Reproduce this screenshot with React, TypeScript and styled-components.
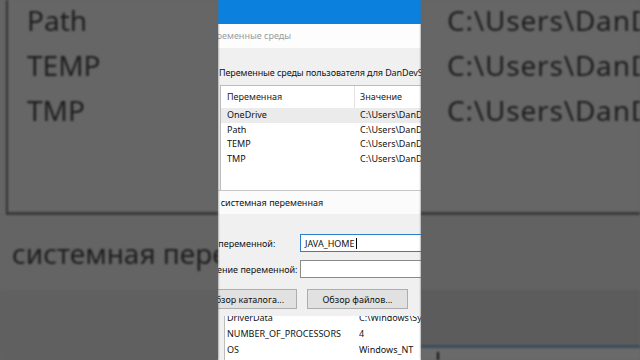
import React from "react";
import styled, { createGlobalStyle } from "styled-components";

const GlobalStyle = createGlobalStyle`
  html, body {
    margin: 0;
    padding: 0;
    background: #646464;
  }
  body {
    font-family: "Noto Sans", "Liberation Sans", sans-serif;
  }
`;

const Frame = styled.div`
  width: 640px;
  height: 360px;
  display: flex;
  overflow: hidden;
  background: #646464;
`;

/* blurred, zoomed copy of the dialog on both sides of the video */
const Backdrop = styled.div<{ $width: number; $spacing?: number }>`
  width: ${(p) => p.$width}px;
  flex: none;
  display: flex;
  flex-direction: column;
  overflow: hidden;
  color: #1d1d1d;
  font-size: 28px;
  letter-spacing: ${(p) => p.$spacing ?? 0}px;
  filter: blur(1px);
`;

const ZoomList = styled.div<{ $edge?: boolean; $pad: number }>`
  height: 212px;
  flex: none;
  margin-left: ${(p) => (p.$edge ? 6 : 0)}px;
  padding-left: ${(p) => p.$pad}px;
  border-left: ${(p) => (p.$edge ? "2px solid #333" : "none")};
  border-bottom: 3px solid #3a3a3a;
  background: #666;
`;

const ZoomRows = styled.div`
  margin-top: -2px;
`;

const ZoomRow = styled.div`
  height: 45px;
  line-height: 45px;
  white-space: nowrap;
`;

const ZoomBand = styled.div<{ $tone: string; $h?: number }>`
  height: ${(p) => (p.$h ? `${p.$h}px` : "auto")};
  flex: ${(p) => (p.$h ? "none" : 1)};
  background: ${(p) => p.$tone};
  padding-left: 12px;
  padding-top: 18px;
  line-height: 40px;
  white-space: nowrap;
  box-sizing: border-box;
`;

const ZoomInputEdge = styled.div`
  flex: 1;
  background: #6a6a6a;
  border-top: 3px solid #3b4c5a;
  padding-left: 16px;
  padding-top: 4px;
`;

const ZoomCaret = styled.div`
  width: 2px;
  height: 12px;
  background: #111;
`;

/* the actual video strip */
const Strip = styled.div`
  width: 203px;
  flex: none;
  display: flex;
  flex-direction: column;
  overflow: hidden;
  background: #f0f0f0;
  font-size: 9px;
  color: #111;
`;

const TitleBar = styled.div`
  height: 24px;
  flex: none;
  background: #0c80dd;
`;

const InactiveTitle = styled.div`
  height: 24px;
  flex: none;
  background: #fdfdfd;
  color: #9b9b9b;
  line-height: 24px;
  white-space: nowrap;
  overflow: hidden;
`;

const Clipped = styled.span<{ $shift: number }>`
  display: inline-block;
  margin-left: ${(p) => -p.$shift}px;
  white-space: nowrap;
`;

const UserPanel = styled.div`
  flex: none;
  padding-top: 19px;
  display: flex;
  flex-direction: column;
`;

const SectionLabel = styled.div`
  height: 12px;
  line-height: 12px;
  padding-left: 1px;
  white-space: nowrap;
  letter-spacing: -0.1px;
`;

const ListBox = styled.div`
  margin-top: 6px;
  margin-left: 2px;
  height: 105px;
  box-sizing: border-box;
  background: #fff;
  border: 1px solid #bcbcbc;
  border-right: none;
  border-bottom: none;
`;

const ListHeader = styled.div`
  display: grid;
  grid-template-columns: 133px 1fr;
  height: 22px;
  align-items: center;
  color: #222;
`;

const HeaderCell = styled.div<{ $divider?: boolean }>`
  padding-left: ${(p) => (p.$divider ? 5 : 6)}px;
  border-left: ${(p) => (p.$divider ? "1px solid #e3e3e3" : "none")};
  line-height: 22px;
  white-space: nowrap;
`;

const ListRow = styled.div<{ $selected?: boolean; $cols: number; $h: number }>`
  display: grid;
  grid-template-columns: ${(p) => p.$cols}px 1fr;
  height: ${(p) => p.$h}px;
  line-height: ${(p) => p.$h}px;
  background: ${(p) => (p.$selected ? "#ebebeb" : "transparent")};
  white-space: nowrap;
`;

const Cell = styled.div<{ $pad: number }>`
  padding-left: ${(p) => p.$pad}px;
  overflow: hidden;
`;

const DialogTitle = styled.div`
  height: 23px;
  flex: none;
  line-height: 23px;
  background: #fbfbfb;
  border-top: 1px solid #c6c6c6;
  padding-left: 4px;
  white-space: nowrap;
  overflow: hidden;
`;

const DialogBody = styled.div`
  flex: none;
  padding: 20px 0 7px;
  display: flex;
  flex-direction: column;
  gap: 8px;
`;

const Field = styled.div`
  display: grid;
  grid-template-columns: 82px 140px;
  height: 18px;
  align-items: center;
`;

const FieldLabel = styled.div`
  overflow: hidden;
  white-space: nowrap;
`;

const TextInput = styled.div<{ $focused?: boolean }>`
  height: 18px;
  box-sizing: border-box;
  background: #fff;
  border: 1px solid ${(p) => (p.$focused ? "#2b7fd0" : "#8a8a8a")};
  padding-left: 4px;
  display: flex;
  align-items: center;
  white-space: nowrap;
`;

const Caret = styled.span`
  width: 1px;
  height: 11px;
  background: #000;
  margin-left: 1px;
`;

const ButtonRow = styled.div`
  margin-top: 3px;
  margin-left: -22px;
  display: flex;
  gap: 10px;
`;

const DialogButton = styled.div`
  width: 101px;
  height: 20px;
  flex: none;
  box-sizing: border-box;
  background: #e1e1e1;
  border: 1px solid #adadad;
  display: flex;
  align-items: center;
  justify-content: center;
  white-space: nowrap;
`;

const SysList = styled.div`
  flex: 1;
  margin-left: 6px;
  background: #fff;
  border-left: 1px solid #bcbcbc;
  overflow: hidden;
`;

const SysRows = styled.div`
  margin-top: -6px;
`;

const userVars = [
  { name: "OneDrive", value: "C:\\Users\\DanDevSoft\\OneDrive" },
  { name: "Path", value: "C:\\Users\\DanDevSoft\\AppData" },
  { name: "TEMP", value: "C:\\Users\\DanDevSoft\\AppData" },
  { name: "TMP", value: "C:\\Users\\DanDevSoft\\AppData" },
];

const sysVars = [
  { name: "DriverData", value: "C:\\Windows\\System32\\Drivers" },
  { name: "NUMBER_OF_PROCESSORS", value: "4" },
  { name: "OS", value: "Windows_NT" },
];

const zoomValues = ["C:\\Users\\DanDevSoft", "C:\\Users\\DanDevSoft", "C:\\Users\\DanDevSoft"];

export default function App() {
  return (
    <>
      <GlobalStyle />
      <Frame>
        <Backdrop $width={218}>
          <ZoomList $edge $pad={19}>
            <ZoomRows>
              <ZoomRow>Path</ZoomRow>
              <ZoomRow>TEMP</ZoomRow>
              <ZoomRow>TMP</ZoomRow>
            </ZoomRows>
          </ZoomList>
          <ZoomBand $tone="#646464" $h={75}>системная переменная</ZoomBand>
          <ZoomBand $tone="#606060" />
        </Backdrop>

        <Strip>
          <TitleBar />
          <InactiveTitle>
            <Clipped $shift={13}>Переменные среды</Clipped>
          </InactiveTitle>
          <UserPanel>
            <SectionLabel>Переменные среды пользователя для DanDevSoft</SectionLabel>
            <ListBox>
              <ListHeader>
                <HeaderCell>Переменная</HeaderCell>
                <HeaderCell $divider>Значение</HeaderCell>
              </ListHeader>
              {userVars.map((v) => (
                <ListRow key={v.name} $selected={v.name === "OneDrive"} $cols={133} $h={14.6}>
                  <Cell $pad={6}>{v.name}</Cell>
                  <Cell $pad={6}>{v.value}</Cell>
                </ListRow>
              ))}
            </ListBox>
          </UserPanel>
          <DialogTitle>
            <Clipped $shift={31}>Новая системная переменная</Clipped>
          </DialogTitle>
          <DialogBody>
            <Field>
              <FieldLabel>
                <Clipped $shift={21}>Имя переменной:</Clipped>
              </FieldLabel>
              <TextInput $focused>
                JAVA_HOME
                <Caret />
              </TextInput>
            </Field>
            <Field>
              <FieldLabel>
                <Clipped $shift={22}>Значение переменной:</Clipped>
              </FieldLabel>
              <TextInput />
            </Field>
            <ButtonRow>
              <DialogButton>Обзор каталога...</DialogButton>
              <DialogButton>Обзор файлов...</DialogButton>
            </ButtonRow>
          </DialogBody>
          <SysList>
            <SysRows>
              {sysVars.map((v) => (
                <ListRow key={v.name} $cols={134} $h={16}>
                  <Cell $pad={2}>{v.name}</Cell>
                  <Cell $pad={0}>{v.value}</Cell>
                </ListRow>
              ))}
            </SysRows>
          </SysList>
        </Strip>

        <Backdrop $width={219} $spacing={0.8}>
          <ZoomList $pad={26}>
            <ZoomRows>
              {zoomValues.map((v, i) => (
                <ZoomRow key={i}>{v}</ZoomRow>
              ))}
            </ZoomRows>
          </ZoomList>
          <ZoomBand $tone="#626262" $h={75} />
          <ZoomBand $tone="#5c5c5c" $h={55} />
          <ZoomInputEdge>
            <ZoomCaret />
          </ZoomInputEdge>
        </Backdrop>
      </Frame>
    </>
  );
}
